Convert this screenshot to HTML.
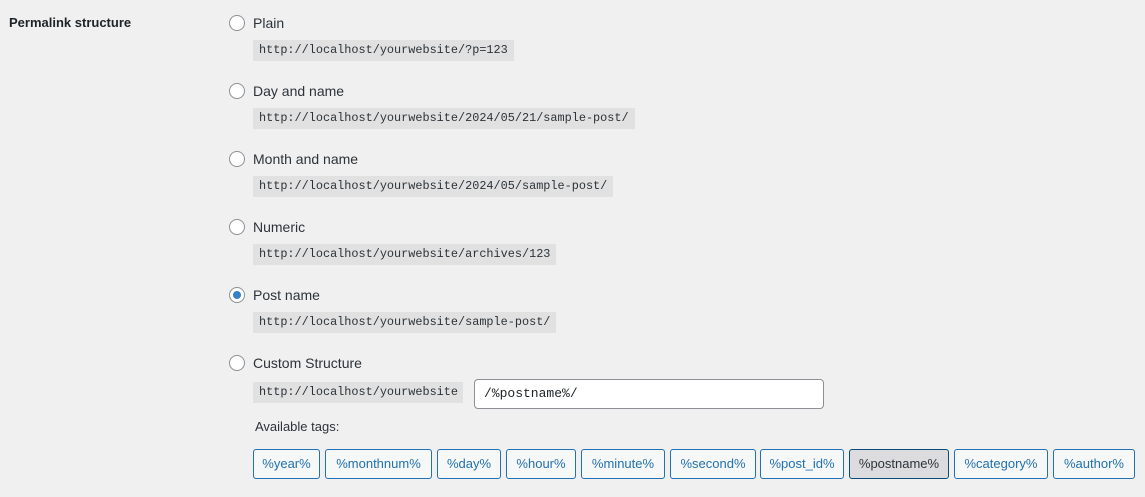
<!DOCTYPE html>
<html><head><meta charset="utf-8"><style>
body{margin:0;background:#f0f0f1;width:1145px;height:497px;overflow:hidden;position:relative;font-family:"Liberation Sans",sans-serif;color:#1d2327;font-size:14px}
.a{position:absolute;white-space:nowrap}
.lbl{left:9px;top:15px;font-weight:bold;font-size:13px}
.r{position:absolute;left:229px;width:14px;height:14px;border:1px solid #8c8f94;border-radius:50%;background:#fff}
.r.on::after{content:"";position:absolute;left:3px;top:3px;width:8px;height:8px;border-radius:50%;background:#3582c4}
.t{position:absolute;left:253px;font-size:14px;color:#2c3338}
code{position:absolute;left:253px;height:21px;line-height:21px;background:#e1e1e2;font-family:"Liberation Mono",monospace;font-size:11.85px;padding:0 6px;box-sizing:border-box;color:#2c3338;white-space:nowrap}
.in{position:absolute;left:474px;top:379px;width:350px;height:30px;border:1px solid #8c8f94;border-radius:4px;background:#fff;box-sizing:border-box;font-family:"Liberation Mono",monospace;font-size:13px;line-height:28px;padding-left:9px}
.b{position:absolute;top:449px;height:30px;border:1px solid #2271b1;border-radius:3px;background:#f6f7f7;color:#2271b1;box-sizing:border-box;font-size:13px;text-align:center;line-height:28px}
.b.on{background:#dcdcde;border-color:#0a4b78;color:#2c3338}
</style></head><body>
<div class="a lbl">Permalink structure</div>
<div class="r" style="top:15px"></div><div class="t" style="top:15px">Plain</div>
<code style="top:40px">http://localhost/yourwebsite/?p=123</code>
<div class="r" style="top:83px"></div><div class="t" style="top:83px">Day and name</div>
<code style="top:108px">http://localhost/yourwebsite/2024/05/21/sample-post/</code>
<div class="r" style="top:151px"></div><div class="t" style="top:151px">Month and name</div>
<code style="top:176px">http://localhost/yourwebsite/2024/05/sample-post/</code>
<div class="r" style="top:219px"></div><div class="t" style="top:219px">Numeric</div>
<code style="top:244px">http://localhost/yourwebsite/archives/123</code>
<div class="r on" style="top:287px"></div><div class="t" style="top:287px">Post name</div>
<code style="top:312px">http://localhost/yourwebsite/sample-post/</code>
<div class="r" style="top:355px"></div><div class="t" style="top:355px">Custom Structure</div>
<code style="top:382px;width:210px">http://localhost/yourwebsite</code>
<div class="in">/%postname%/</div>
<div class="a" style="left:255px;top:419px;font-size:13px;color:#2c3338">Available tags:</div>
<div class="b" style="left:253px;width:67px">%year%</div>
<div class="b" style="left:325px;width:107px">%monthnum%</div>
<div class="b" style="left:437px;width:64px">%day%</div>
<div class="b" style="left:506px;width:70px">%hour%</div>
<div class="b" style="left:581px;width:84px">%minute%</div>
<div class="b" style="left:670px;width:86px">%second%</div>
<div class="b" style="left:760px;width:84px">%post_id%</div>
<div class="b on" style="left:849px;width:100px">%postname%</div>
<div class="b" style="left:954px;width:94px">%category%</div>
<div class="b" style="left:1053px;width:82px">%author%</div>
</body></html>
